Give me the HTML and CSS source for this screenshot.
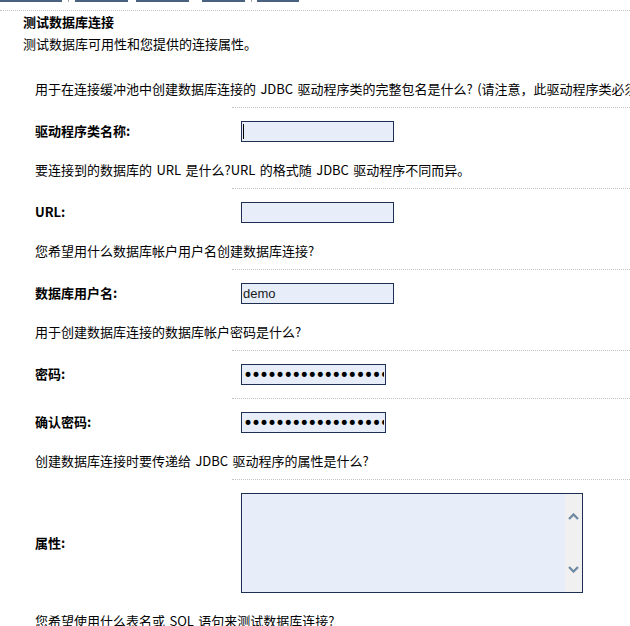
FILE: index.html
```html
<!DOCTYPE html>
<html lang="zh-CN">
<head>
<meta charset="utf-8">
<title>测试数据库连接</title>
<link rel="stylesheet" href="styles.css">
</head>
<body>
<div class="tabs">
  <span class="tab t1"></span><span class="tick"></span>
  <span class="tab t2"></span>
  <span class="tab t3"></span>
  <span class="tab t4"></span><span class="tick"></span>
  <span class="tab t5"></span>
</div>
<div class="rule"></div>
<div class="intro">
  <h1 class="title">测试数据库连接</h1>
  <p class="subtitle">测试数据库可用性和您提供的连接属性。</p>
</div>
<div class="form">
  <p class="question">用于在连接缓冲池中创建数据库连接的 JDBC 驱动程序类的完整包名是什么? (请注意，此驱动程序类必须位于应用服务器的类路径中。)</p>
  <div class="row">
    <label class="label">驱动程序类名称:</label>
    <div class="cell"><div class="field"><input class="text" type="text" value=""><span class="caret"></span></div></div>
  </div>

  <p class="question">要连接到的数据库的 URL 是什么?URL 的格式随 JDBC 驱动程序不同而异。</p>
  <div class="row">
    <label class="label">URL:</label>
    <div class="cell"><div class="field"><input class="text" type="text" value=""></div></div>
  </div>

  <p class="question">您希望用什么数据库帐户用户名创建数据库连接?</p>
  <div class="row">
    <label class="label">数据库用户名:</label>
    <div class="cell"><div class="field"><input class="text" type="text" value="demo"></div></div>
  </div>

  <p class="question">用于创建数据库连接的数据库帐户密码是什么?</p>
  <div class="row">
    <label class="label">密码:</label>
    <div class="cell"><div class="field"><input class="pass" type="password" value="xxxxxxxxxxxxxxxxxxxxxxxx"></div></div>
  </div>
  <div class="row">
    <label class="label">确认密码:</label>
    <div class="cell"><div class="field"><input class="pass" type="password" value="xxxxxxxxxxxxxxxxxxxxxxxx"></div></div>
  </div>

  <p class="question">创建数据库连接时要传递给 JDBC 驱动程序的属性是什么?</p>
  <div class="row">
    <label class="label">属性:</label>
    <div class="cell">
      <div class="area">
        <textarea class="area-input"></textarea>
        <div class="scroll">
          <svg class="chev" width="11" height="7" viewBox="0 0 11 7"><path d="M1 6 L5.5 1.5 L10 6" fill="none" stroke="#6f8aa3" stroke-width="2.3"/></svg>
          <svg class="chev" width="11" height="7" viewBox="0 0 11 7"><path d="M1 1 L5.5 5.5 L10 1" fill="none" stroke="#6f8aa3" stroke-width="2.3"/></svg>
        </div>
      </div>
    </div>
  </div>

  <p class="question">您希望使用什么表名或 SQL 语句来测试数据库连接?</p>
</div>
</body>
</html>
```
FILE: styles.css
```css
html, body {
  margin: 0;
  padding: 0;
  overflow: hidden;
  background: #ffffff;
}
body {
  font-family: "Noto Sans CJK SC", "Liberation Sans", sans-serif;
  font-size: 13px;
  line-height: 16px;
  word-spacing: 1.5px;
  color: #000;
  width: 630px;
}
.tabs {
  display: flex;
  height: 2px;
}
.tab {
  height: 2px;
  background: #4b6180;
}
.t1 { width: 62px; }
.t2 { width: 53px; margin-left: 13px; }
.t3 { width: 53px; margin-left: 8px; }
.t4 { width: 43px; margin-left: 13px; }
.t5 { width: 42px; margin-left: 12px; }
.tick {
  width: 1px;
  height: 2px;
  background: #9aa3ad;
  margin-left: 6px;
  margin-right: -7px;
}
.rule {
  margin-top: 8px;
  border-top: 1px dotted #c4c4c4;
}
.intro {
  padding-left: 23px;
}
.title {
  margin: 0;
  padding-top: 3px;
  font-size: 13px;
  line-height: 16px;
  font-weight: bold;
}
.subtitle {
  margin: 6px 0 0;
}
.form {
  margin-top: 22px;
}
.question {
  margin: 0;
  padding: 7px 0 10px 35px;
  white-space: nowrap;
  overflow: hidden;
}
.row {
  display: grid;
  grid-template-columns: 232px 1fr;
  align-items: center;
}
.label {
  padding-left: 35px;
  font-weight: bold;
}
.cell {
  border-top: 1px dotted #c4c4c4;
  padding: 13px 0 13px 9px;
}
.field {
  position: relative;
  width: max-content;
}
.text, .pass {
  display: block;
  box-sizing: border-box;
  height: 21px;
  border: 1px solid #1d3054;
  background: #e7eefa;
  padding: 0 1px;
  margin: 0;
  outline: none;
  color: #1a1a1a;
}
.text {
  width: 153px;
  font-family: "Liberation Sans", "DejaVu Sans", sans-serif;
  font-size: 13px;
  word-spacing: 0;
}
.pass {
  width: 145px;
  font-family: "DejaVu Sans", sans-serif;
  font-size: 17px;
  letter-spacing: -2px;
  color: #000;
}
.caret {
  position: absolute;
  left: 2px;
  top: 3px;
  width: 1px;
  height: 15px;
  background: #000;
}
.area {
  display: flex;
  box-sizing: border-box;
  width: 342px;
  height: 100px;
  border: 1px solid #1d3054;
  background: #e7eefa;
}
.area-input {
  flex: 1;
  border: 0;
  margin: 0;
  padding: 2px;
  background: transparent;
  resize: none;
  outline: none;
  overflow: hidden;
  font-family: "Liberation Sans", sans-serif;
  font-size: 13px;
}
.scroll {
  width: 17px;
  background: #f0f0f0;
  display: flex;
  flex-direction: column;
  justify-content: space-between;
  align-items: center;
  padding: 19px 0 19px;
}
.chev {
  display: block;
}
```
